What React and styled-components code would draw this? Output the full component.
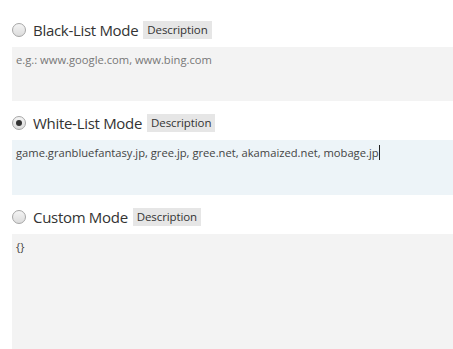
import React from "react";
import styled, { createGlobalStyle } from "styled-components";

const Global = createGlobalStyle`
  html, body { margin: 0; padding: 0; background: #fff; overflow: hidden; }
  body { font-family: "Open Sans", "Noto Sans", sans-serif; }
`;

const Page = styled.div`
  padding: 21px 0 0 12px;
  display: flex;
  flex-direction: column;
  gap: 13px;
`;

const Section = styled.div`
  display: flex;
  flex-direction: column;
  gap: 8px;
`;

const LabelRow = styled.label`
  display: flex;
  align-items: center;
  height: 18px;
`;

const Radio = styled.span`
  box-sizing: border-box;
  width: 14px;
  height: 14px;
  border-radius: 50%;
  border: 1px solid #a6a6a6;
  background: linear-gradient(#f4f4f4, #dcdcdc);
  display: flex;
  align-items: center;
  justify-content: center;
  margin-right: 7px;
  &::after {
    content: "";
    width: 6px;
    height: 6px;
    border-radius: 50%;
    background: ${(p) => (p.$checked ? "#333" : "transparent")};
  }
`;

const Title = styled.span`
  font-size: 15px;
  color: #333;
  margin-right: 5px;
  letter-spacing: -0.3px;
`;

const Badge = styled.span`
  background: #e6e6e6;
  color: #333;
  font-size: 11.5px;
  height: 18px;
  line-height: 18px;
  padding: 0 4px;
  letter-spacing: -0.1px;
`;

const Area = styled.div`
  box-sizing: border-box;
  height: ${(p) => p.$h}px;
  background: ${(p) => (p.$focus ? "#edf4f8" : "#f3f3f3")};
  padding: 5px 4px;
  font-size: 11.2px;
  line-height: 16px;
  color: ${(p) => (p.$placeholder ? "#777" : "#444")};
`;

const Caret = styled.span`
  display: inline-block;
  width: 1px;
  height: 15px;
  background: #222;
  vertical-align: -3px;
`;

const Mode = ({ title, checked, children, h, focus, placeholder }) => (
  <Section>
    <LabelRow>
      <Radio $checked={checked} />
      <Title>{title}</Title>
      <Badge>Description</Badge>
    </LabelRow>
    <Area $h={h} $focus={focus} $placeholder={placeholder}>
      {children}
    </Area>
  </Section>
);

export default function App() {
  return (
    <>
      <Global />
      <Page>
        <Mode title="Black-List Mode" h={54} placeholder>
          e.g.: www.google.com, www.bing.com
        </Mode>
        <Mode title="White-List Mode" h={55} checked focus>
          game.granbluefantasy.jp, gree.jp, gree.net, akamaized.net, mobage.jp
          <Caret />
        </Mode>
        <Mode title="Custom Mode" h={116}>
          {"{}"}
        </Mode>
      </Page>
    </>
  );
}
